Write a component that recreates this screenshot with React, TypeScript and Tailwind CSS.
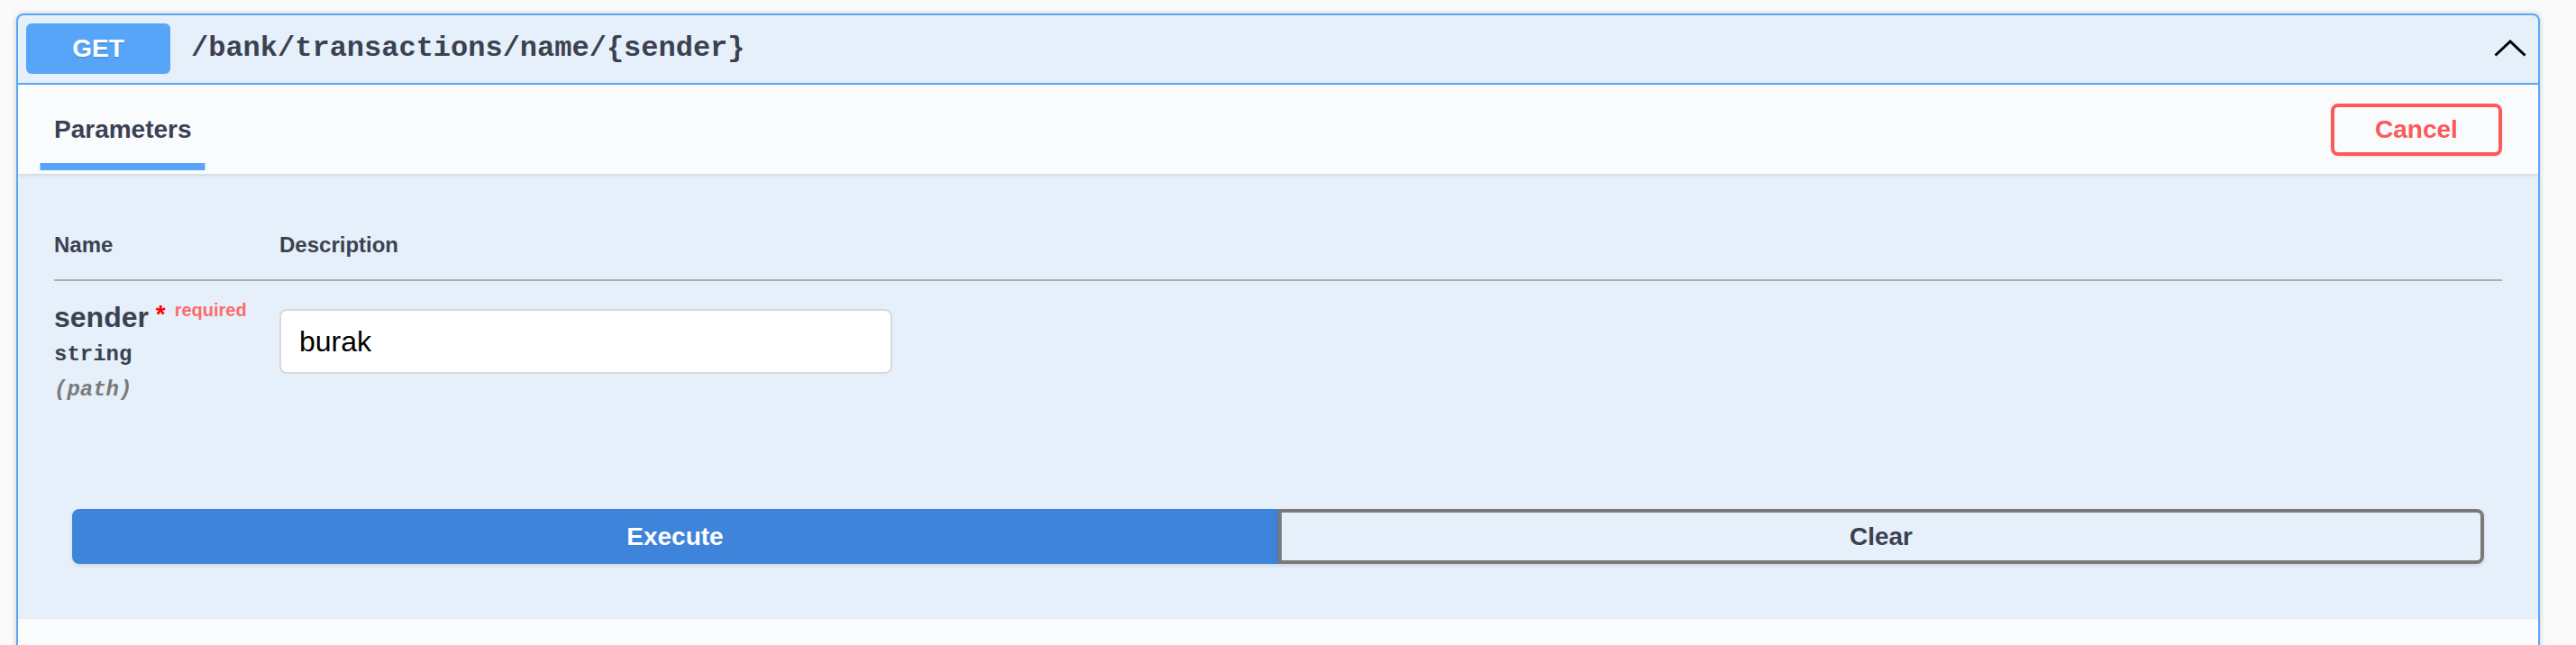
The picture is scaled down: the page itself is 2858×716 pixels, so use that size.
import React from 'react';

const sans = { fontFamily: '"Liberation Sans", Arial, Helvetica, sans-serif' };
const mono = { fontFamily: '"Liberation Mono", "Courier New", monospace' };

export default function App() {
  return (
    <div className="min-h-screen bg-[#fafafa] pt-[15px] pl-[18px]" style={sans}>
      {/* GET operation block */}
      <div className="w-[2800px] rounded-[8px] border-2 border-[#5aa7f9] bg-[#e6f0fa] shadow-[0_0_6px_rgba(0,0,0,0.19)] overflow-hidden">
        {/* Summary */}
        <div className="flex items-center pl-[9px] pr-[13px] pt-[9px] pb-[10px] border-b-2 border-[#5aa7f9]">
          <span className="flex h-[56px] w-[160px] items-center justify-center rounded-[6px] bg-[#56a5f9] text-[28px] font-bold text-white [text-shadow:0_2px_0_rgba(0,0,0,0.1)]">
            GET
          </span>
          <span className="ml-[23px] text-[32px] font-bold text-[#3b4151]" style={mono}>
            /bank/transactions/name/{'{sender}'}
          </span>
          <div className="ml-auto flex items-center">
            <svg width="36" height="20" viewBox="0 0 36 20">
              <polyline points="1.5,17.5 18,2 34.5,17.5" fill="none" stroke="#000" strokeWidth="3" />
            </svg>
          </div>
        </div>

        {/* Section header with tab */}
        <div className="flex h-[99px] items-center justify-between bg-[#f9fbfd] px-[40px] shadow-[0_2px_4px_rgba(0,0,0,0.1)]">
          <div className="relative">
            <h4 className="text-[28px] font-bold leading-[32px] text-[#3b4151]">Parameters</h4>
            <span className="absolute left-1/2 top-[53px] h-[8px] w-[120%] -translate-x-1/2 bg-[#56a5f9]"></span>
          </div>
          <button className="flex h-[58px] w-[190px] items-center justify-center rounded-[8px] border-4 border-[#fb5a5a] bg-transparent text-[28px] font-bold text-[#fb5a5a] shadow-[0_1px_2px_rgba(0,0,0,0.1)]">
            Cancel
          </button>
        </div>

        {/* Parameters table */}
        <div className="px-[40px] pt-[41px]">
          <div className="flex border-b-2 border-[#a9afb8] pt-[24px] pb-[24px] text-[24px] font-bold leading-[28px] text-[#3b4151]">
            <div className="w-[250px]">Name</div>
            <div>Description</div>
          </div>
          <div className="flex pt-[21px] pb-[20px]">
            <div className="w-[250px]">
              <div className="whitespace-nowrap text-[32px] font-bold leading-[38px] text-[#3b4151]">
                sender
                <span className="relative -top-[5px] text-[28px] text-[#ff0000]">&nbsp;*</span>
                <span className="relative -top-[12px] pl-[10px] text-[20px] font-bold text-[#ff6b6b]">required</span>
              </div>
              <div className="mt-[5px] text-[24px] font-bold leading-[28px] text-[#3b4151]" style={mono}>
                string
              </div>
              <div className="mt-[11px] text-[24px] font-bold italic leading-[28px] text-[#7a7a7a]" style={mono}>
                (path)
              </div>
            </div>
            <div>
              <input
                readOnly
                value="burak"
                className="mt-[10px] h-[72px] w-[680px] rounded-[8px] border-2 border-[#d9d9d9] bg-white px-[20px] text-[32px] text-black outline-none"
                style={sans}
              />
            </div>
          </div>
        </div>

        {/* Execute / Clear */}
        <div className="flex px-[60px] pt-[98px] pb-[61px]">
          <button className="h-[61px] flex-1 rounded-l-[8px] border-4 border-[#3e84da] bg-[#3e84da] text-[28px] font-bold text-white shadow-[0_2px_4px_rgba(0,0,0,0.1)]">
            Execute
          </button>
          <button className="h-[61px] flex-1 rounded-r-[8px] border-4 border-[#797979] bg-transparent text-[28px] font-bold text-[#3b4151] shadow-[0_2px_4px_rgba(0,0,0,0.1)]">
            Clear
          </button>
        </div>

        {/* Responses header (cut off) */}
        <div className="h-[100px] bg-[#f9fbfd] shadow-[0_2px_4px_rgba(0,0,0,0.1)]"></div>
      </div>
    </div>
  );
}
